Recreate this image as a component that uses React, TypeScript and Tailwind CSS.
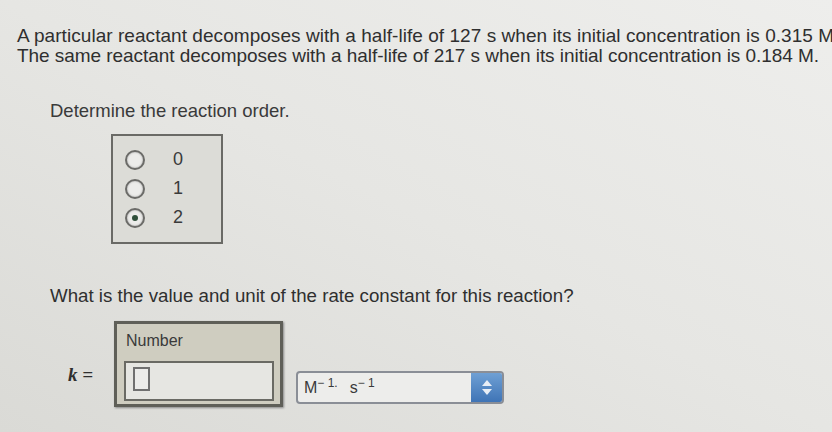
import React from "react";

function Radio({ label, checked }: { label: string; checked?: boolean }) {
  return (
    <div className="flex h-[29px] items-center">
      <span className="flex h-[20px] w-[20px] items-center justify-center rounded-full border-[2px] border-[#6b6b68] bg-[#ececea] shadow-[inset_0_0_2px_#999]">
        {checked && <span className="h-[6px] w-[6px] rounded-full bg-[#2f4f3a]" />}
      </span>
      <span className="ml-[28px] text-[18px] text-[#3a3a3a]">{label}</span>
    </div>
  );
}

export default function App() {
  return (
    <div
      className="h-[432px] w-[832px] overflow-hidden bg-gradient-to-bl from-[#eeeeec] via-[#e6e6e3] to-[#dadad6] text-[#2f2f2f]"
      style={{ fontFamily: '"Liberation Sans", Arial, sans-serif' }}
    >
      <div className="pl-[17px] pt-[26px] text-[19px] leading-[20px] whitespace-nowrap">
        <p className="tracking-[0.05px]">
          A particular reactant decomposes with a half-life of 127 s when its initial concentration is 0.315 M
        </p>
        <p className="tracking-[-0.05px]">
          The same reactant decomposes with a half-life of 217 s when its initial concentration is 0.184 M.
        </p>
      </div>

      <p className="mt-[35px] pl-[50px] text-[18.5px] leading-[20px] text-[#3a3a3a]">Determine the reaction order.</p>

      <div className="ml-[111px] mt-[13px] w-[112px] border-[2px] border-[#6a6a66] bg-[#dcdcd7] pl-[12px] pt-[9px] pb-[10px]">
        <Radio label="0" />
        <Radio label="1" />
        <Radio label="2" checked />
      </div>

      <p className="mt-[42px] pl-[50px] text-[18.7px] leading-[20px] text-[#2f2f2f]">
        What is the value and unit of the rate constant for this reaction?
      </p>

      <div className="mt-[15px] flex items-end">
        <span
          className="mb-[18px] ml-[68px] w-[46px] text-[19px] font-bold italic text-[#2f2f2f]"
          style={{ fontFamily: '"Liberation Serif", "Times New Roman", serif' }}
        >
          k =
        </span>
        <div className="h-[86px] w-[169px] border-[3px] border-[#5f5f58] bg-[#cfcdc0] px-[7px] pt-[8px] shadow-[1px_1px_2px_#888]">
          <p className="pl-[2px] text-[16px] leading-[18px] text-[#3a3a3a]">Number</p>
          <div className="mt-[11px] h-[40px] w-[150px] border-[2px] border-[#6a6a64] bg-[#e6e6e2] pl-[7px] pt-[4px]">
            <span className="block h-[24px] w-[17px] border-[2px] border-[#707070] bg-[#ececea]" />
          </div>
        </div>
        <div className="mb-[3px] ml-[13px] flex h-[33px] w-[208px] overflow-hidden rounded-[4px] border-[2px] border-[#8a8e96] bg-[#ededeb]">
          <div className="flex flex-1 items-center pl-[6px] text-[16px] text-[#3a3a3a]">
            <span>
              M<sup className="text-[12px]">−</sup>
              <sup className="text-[12px]"> 1.</sup>
            </span>
            <span className="ml-[12px]">
              s<sup className="text-[12px]">−</sup>
              <sup className="text-[12px]"> 1</sup>
            </span>
          </div>
          <div className="flex w-[31px] flex-col items-center justify-center gap-[3px] bg-gradient-to-b from-[#6fa0d4] to-[#3f74b6]">
            <svg width="10" height="6" viewBox="0 0 10 6">
              <path d="M5 0 L10 6 L0 6 Z" fill="#e8eef6" />
            </svg>
            <svg width="10" height="6" viewBox="0 0 10 6">
              <path d="M0 0 L10 0 L5 6 Z" fill="#e8eef6" />
            </svg>
          </div>
        </div>
      </div>
    </div>
  );
}
